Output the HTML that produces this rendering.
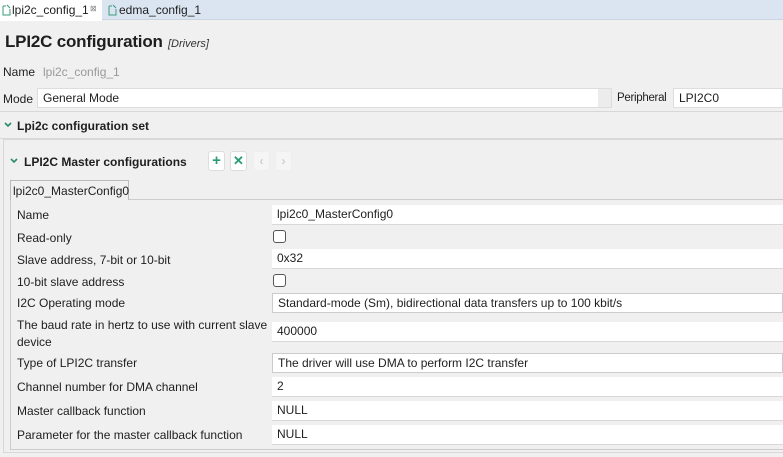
<!DOCTYPE html>
<html><head><style>
*{box-sizing:border-box;margin:0;padding:0}
body{width:783px;height:457px;overflow:hidden;background:#f0f0f0;font-family:"Liberation Sans",sans-serif;font-size:12px;color:#1e1e1e;position:relative}
.a{position:absolute;white-space:nowrap}
.in{position:absolute;background:#fff;border-bottom:1px solid #d8d8d8;height:20px;line-height:19px;padding-left:5px;font-size:12px}
.cb{position:absolute;width:13px;height:13px;border:1px solid #555;border-radius:3px;background:#fff}
.btn{position:absolute;top:151px;width:17px;height:20px;border:1px solid #ddd;border-radius:3px;background:#fff;color:#2a9a7a;text-align:center;line-height:18px;font-size:15px;font-weight:bold}
</style></head><body>
<div class="a" style="left:0;top:0;width:783px;height:20px;background:#dae5f1;border-bottom:1px solid #c8d4e0"></div>
<div class="a" style="left:0;top:0;width:102px;height:21px;background:#fff"></div>
<svg class="a" style="left:1px;top:4px" width="10" height="12"><path d="M2 2h3M2 2v9h7V5M6 1l3 3" stroke="#3a9a7a" fill="none"/></svg>
<div class="a" style="left:12px;top:3px;font-size:12px">lpi2c_config_1</div>
<div class="a" style="left:90px;top:4px;font-size:8px;color:#888">⊠</div>
<svg class="a" style="left:107px;top:4px" width="10" height="12"><path d="M2 2h3M2 2v9h7V5M6 1l3 3" stroke="#3a9a7a" fill="none"/></svg>
<div class="a" style="left:119px;top:3px;font-size:12px">edma_config_1</div>
<div class="a" style="left:5px;top:32px;font-size:17px;font-weight:bold;letter-spacing:-0.2px">LPI2C configuration</div>
<div class="a" style="left:168px;top:38px;font-size:11px;font-style:italic;color:#333">[Drivers]</div>
<div class="a" style="left:3px;top:65px">Name</div>
<div class="a" style="left:43px;top:65px;color:#999">lpi2c_config_1</div>
<div class="a" style="left:3px;top:92px">Mode</div>
<div class="in" style="left:37px;top:88px;width:562px;border:1px solid #ddd">General Mode</div>
<div class="a" style="left:598px;top:88px;width:14px;height:20px;background:#ececec;border:1px solid #ddd;border-left:none"></div>
<div class="a" style="left:617px;top:92px;font-size:11.5px;letter-spacing:-0.3px">Peripheral</div>
<div class="in" style="left:673px;top:88px;width:110px;border:1px solid #ddd">LPI2C0</div>
<div class="a" style="left:0;top:111px;width:783px;height:1px;background:#d8d8d8"></div>
<svg class="a" style="left:4px;top:122px" width="8" height="6"><path d="M1 1l3 3 3-3" stroke="#2a8a6a" stroke-width="1.6" fill="none"/></svg>
<div class="a" style="left:17px;top:119px;font-weight:bold">Lpi2c configuration set</div>
<div class="a" style="left:0;top:138px;width:783px;height:1px;background:#d8d8d8"></div>
<div class="a" style="left:3px;top:139px;width:790px;height:314px;border:1px solid #d8d8d8;border-right:none"></div>
<svg class="a" style="left:10px;top:158px" width="8" height="6"><path d="M1 1l3 3 3-3" stroke="#2a8a6a" stroke-width="1.6" fill="none"/></svg>
<div class="a" style="left:24px;top:155px;font-weight:bold">LPI2C Master configurations</div>
<div class="btn" style="left:208px">+</div>
<div class="btn" style="left:230px;font-size:13px">✕</div>
<div class="btn" style="left:253px;border-color:#eee;color:#ccc;font-size:12px;background:#f5f5f5">‹</div>
<div class="btn" style="left:275px;border-color:#eee;color:#ccc;font-size:12px;background:#f5f5f5">›</div>
<div class="a" style="left:10px;top:199px;width:780px;height:251px;border:1px solid #ccc;border-right:none"></div>
<div class="a" style="left:10px;top:180px;width:119px;height:20px;background:#f0f0f0;border:1px solid #bbb;border-bottom:none;padding:3px 0 0 2px">lpi2c0_MasterConfig0</div>
<div class="a" style="left:17px;top:208px">Name</div><div class="in" style="left:272px;top:205px;width:511px">lpi2c0_MasterConfig0</div>
<div class="a" style="left:17px;top:231px">Read-only</div><div class="cb" style="left:273px;top:230px"></div>
<div class="a" style="left:17px;top:253px">Slave address, 7-bit or 10-bit</div><div class="in" style="left:272px;top:249px;width:511px">0x32</div>
<div class="a" style="left:17px;top:275px">10-bit slave address</div><div class="cb" style="left:273px;top:274px"></div>
<div class="a" style="left:17px;top:296px">I2C Operating mode</div><div class="in" style="left:272px;top:293px;width:511px;border:1px solid #ccc">Standard-mode (Sm), bidirectional data transfers up to 100 kbit/s</div>
<div class="a" style="left:17px;top:318px">The baud rate in hertz to use with current slave</div>
<div class="a" style="left:17px;top:335px">device</div><div class="in" style="left:272px;top:322px;width:511px">400000</div>
<div class="a" style="left:17px;top:356px">Type of LPI2C transfer</div><div class="in" style="left:272px;top:353px;width:511px;border:1px solid #ccc">The driver will use DMA to perform I2C transfer</div>
<div class="a" style="left:17px;top:380px">Channel number for DMA channel</div><div class="in" style="left:272px;top:377px;width:511px">2</div>
<div class="a" style="left:17px;top:404px">Master callback function</div><div class="in" style="left:272px;top:401px;width:511px">NULL</div>
<div class="a" style="left:17px;top:428px">Parameter for the master callback function</div><div class="in" style="left:272px;top:425px;width:511px">NULL</div>
</body></html>
